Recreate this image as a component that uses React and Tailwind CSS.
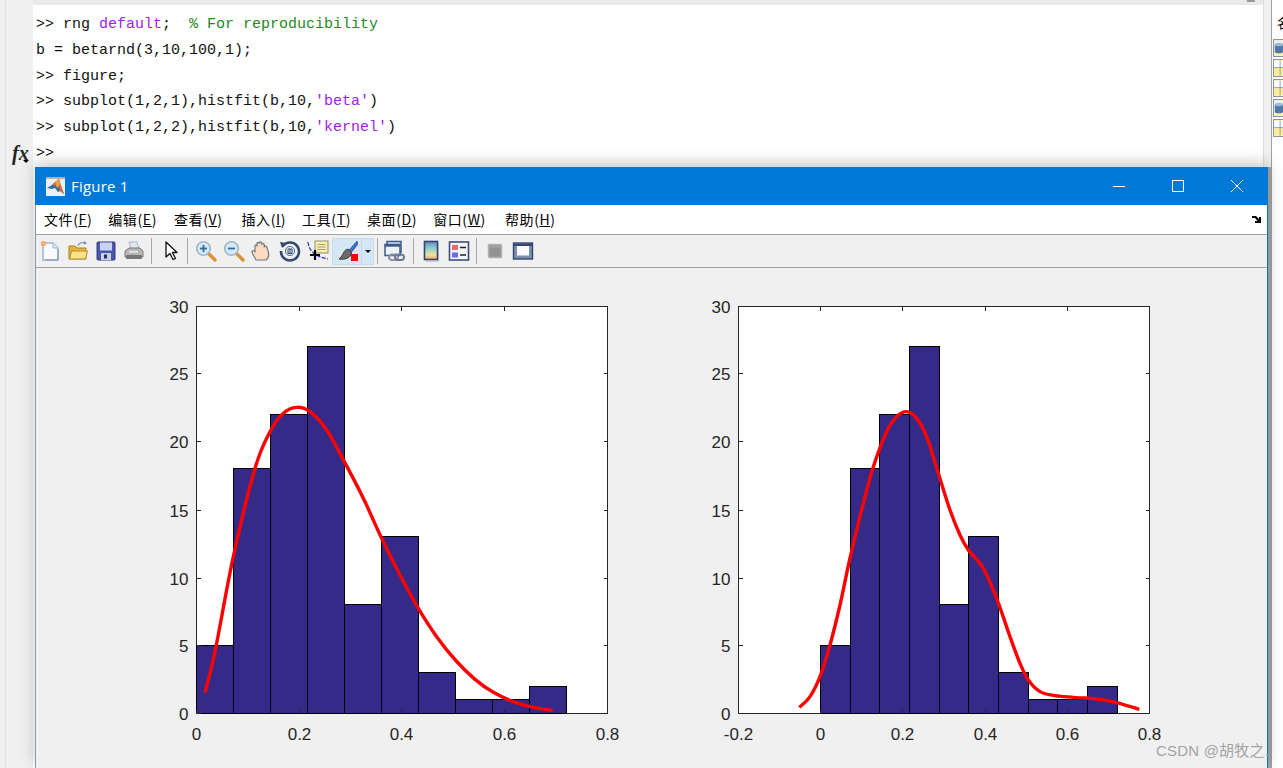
import React from "react";

const mono = "font-['Liberation_Mono',monospace]";

function smooth(zoomPts, ox) {
  const p = zoomPts.map(([x, y]) => [x / 3 + ox, y / 3 + 290]);
  let d = `M${p[0][0]} ${p[0][1]}`;
  for (let i = 0; i < p.length - 1; i++) {
    const a = p[Math.max(i - 1, 0)], b = p[i], c = p[i + 1], e = p[Math.min(i + 2, p.length - 1)];
    d += `C${b[0] + (c[0] - a[0]) / 6} ${b[1] + (c[1] - a[1]) / 6} ${c[0] - (e[0] - b[0]) / 6} ${c[1] - (e[1] - b[1]) / 6} ${c[0]} ${c[1]}`;
  }
  return d;
}

const counts = [5, 18, 22, 27, 8, 13, 3, 1, 1, 2];
const yTicks = [[30, 306.5], [25, 373.5], [20, 441.5], [15, 510.5], [10, 578.5], [5, 645.5], [0, 713.5]];

const leftCurve = [[165,1208],[195,1085],[250,800],[315,535],[360,425],[400,370],[440,352],[480,365],[530,420],[583,515],[640,625],[695,745],[750,855],[805,955],[860,1040],[916,1110],[975,1168],[1030,1207],[1090,1235],[1140,1250],[1208,1262]];
const rightCurve = [[298,1252],[330,1220],[360,1160],[390,1065],[420,945],[451,800],[490,640],[520,530],[560,425],[590,380],[620,365],[650,385],[680,440],[715,550],[750,660],[780,735],[805,780],[850,835],[890,925],[930,1040],[960,1120],[985,1170],[1020,1205],[1060,1216],[1120,1222],[1200,1228],[1250,1238],[1318,1258]];

function Plot({ ox, axL, axR, edges, xTicks, curve, className }) {
  const zero = 713.5, unit = 13.6;
  return (
    <svg width="480" height="478" viewBox={`${ox} 290 480 478`} className={className}>
      <rect x={axL} y="306.5" width={axR - axL} height="407" fill="#fff" stroke="#262626" shapeRendering="crispEdges" />
      <g fill="#352a87" stroke="#000" shapeRendering="crispEdges">
        {counts.map((c, i) => (
          <rect key={i} x={edges[i]} y={zero - c * unit} width={edges[i + 1] - edges[i]} height={c * unit} />
        ))}
      </g>
      <g stroke="#262626" shapeRendering="crispEdges">
        {yTicks.map(([, y]) => (
          <g key={y}>
            <line x1={axL} x2={axL + 4} y1={y} y2={y} />
            <line x1={axR - 4} x2={axR} y1={y} y2={y} />
          </g>
        ))}
        {xTicks.map(([, x]) => (
          <g key={x}>
            <line x1={x} x2={x} y1="306.5" y2="310.5" />
            <line x1={x} x2={x} y1="709.5" y2="713.5" />
          </g>
        ))}
      </g>
      <path d={smooth(curve, ox)} fill="none" stroke="#ff0000" strokeWidth="3.4" />
      <g fill="#262626" fontFamily="'Liberation Sans', Arial, sans-serif" fontSize="17">
        {yTicks.map(([t, y]) => (
          <text key={t} x={axL - 8} y={y + 6.5} textAnchor="end">{t}</text>
        ))}
        {xTicks.map(([t, x]) => (
          <text key={t} x={x} y="740" textAnchor="middle">{t}</text>
        ))}
      </g>
    </svg>
  );
}

const Ico = ({ children, w = 28 }) => (
  <div className="h-[24px] flex items-center justify-center shrink-0" style={{ width: w }}>
    <svg width="22" height="22" viewBox="0 0 22 22">{children}</svg>
  </div>
);
const Sep = ({ className }) => <div className={`w-[1px] h-[26px] bg-[#a8a8a8] shrink-0 ${className}`} />;

const NewDoc = () => (
  <Ico>
    <path d="M4 3h10l5 5v12H4z" fill="#f7fbff" stroke="#9db4d6" strokeWidth="1.5" />
    <path d="M14 3v5h5" fill="#dbe6f5" stroke="#9db4d6" />
    <path d="M19 9v11H6" fill="none" stroke="#7e97bd" strokeWidth="1" />
    <circle cx="4.5" cy="3.5" r="2.6" fill="#f6a05a" />
    <circle cx="4.5" cy="3.5" r="1.1" fill="#ffe0b8" />
  </Ico>
);
const OpenFolder = () => (
  <Ico>
    <path d="M11 6c1-3 4-4 7-3" fill="none" stroke="#8fa3bb" strokeWidth="1.6" />
    <path d="M17 1l3 2-3 2z" fill="#7e93ad" />
    <path d="M2 6h6l2 2h9v11H2z" fill="#e3b43f" stroke="#a98222" />
    <path d="M2.5 19l2-8h16l-2 8z" fill="#fbe28a" stroke="#b48c2c" />
  </Ico>
);
const Save = () => (
  <Ico>
    <rect x="2" y="2" width="18" height="18" rx="1" fill="#4a56ad" stroke="#2f3a80" />
    <rect x="5" y="2.5" width="12" height="8" fill="#c9d2f0" />
    <rect x="6" y="13" width="10" height="7" fill="#c9cfe6" />
    <rect x="9" y="14.5" width="3" height="4" fill="#26305f" />
  </Ico>
);
const Printer = () => (
  <Ico>
    <path d="M6 2h8l2 7H8z" fill="#dfe6f2" stroke="#a9b4c4" />
    <path d="M2 11l4-3h11l3 3v6H2z" fill="#b5b5b5" stroke="#7a7a7a" />
    <rect x="3" y="15" width="16" height="4" rx="1" fill="#777" />
    <rect x="6" y="11" width="9" height="1.6" fill="#e8e8e8" />
  </Ico>
);
const Cursor = () => (
  <Ico>
    <path d="M6 2v15l4-3.5 3 6 2.4-1.2-3-5.8H17z" fill="#fff" stroke="#111" strokeWidth="1.3" strokeLinejoin="round" />
  </Ico>
);
const Zoom = ({ plus }) => (
  <Ico>
    <path d="M13 13l7 7" stroke="#dd9233" strokeWidth="3.4" strokeLinecap="round" />
    <circle cx="8.5" cy="8.5" r="6.8" fill="#d6e8f6" stroke="#9cb6cd" strokeWidth="1.6" />
    <path d="M5 8.5h7" stroke="#2f6d9e" strokeWidth="1.8" />
    {plus && <path d="M8.5 5v7" stroke="#2f6d9e" strokeWidth="1.8" />}
  </Ico>
);
const Hand = () => (
  <Ico>
    <path d="M5 20c-1-3-4-6-4-8s2-1.5 3 0V6c0-1.5 2-1.5 2 0V3.5c0-1.5 2.4-1.5 2.4 0V3c0-1.5 2.4-1.5 2.4 0v1.5c0-1.5 2.4-1.5 2.4 0V7c.5-1.5 2.6-1.2 2.6.4C18 12 19 17 15 20z" fill="#fbdcc0" stroke="#737a86" strokeWidth="1.2" strokeLinejoin="round" />
  </Ico>
);
const Rotate = () => (
  <Ico>
    <path d="M3.5 6.5A9 9 0 1 1 2 11" fill="none" stroke="#2f4a72" strokeWidth="2.6" />
    <path d="M1 2l6 1-4 5z" fill="#2f4a72" />
    <circle cx="11" cy="11" r="4.6" fill="#dfe6ee" stroke="#5a6f8e" />
    <path d="M9 9h4v4.5H9zM11 9v4.5" fill="none" stroke="#2f4a72" strokeWidth="1" />
  </Ico>
);
const DataCursor = () => (
  <Ico>
    <path d="M1 2c1 8 5 14 20 17" fill="none" stroke="#2a2ad8" strokeWidth="1.2" strokeDasharray="4 1.5" />
    <rect x="8" y="1" width="13" height="12" fill="#f7eeb0" stroke="#8d8d6a" />
    <path d="M10.5 4.5h8M10.5 7h8M10.5 9.5h8" stroke="#a3a07c" />
    <path d="M8 10v10M3 15h10" stroke="#000" strokeWidth="2.2" />
  </Ico>
);
const Brush = () => (
  <Ico>
    <path d="M21 1l-8 9 2.4 2.4L22 4z" fill="#3b6fc6" stroke="#2a4a8a" strokeWidth="0.6" />
    <path d="M12 9c-5 1-4 6-9 10 6 1 12-1 12.5-6.5z" fill="#6b6b6b" stroke="#3a3a3a" />
    <rect x="15" y="14" width="7" height="7" fill="#ff0000" />
  </Ico>
);
const Link = () => (
  <Ico>
    <rect x="3" y="1.5" width="14" height="11" fill="#d9e3f2" stroke="#3c5a8a" strokeWidth="1.5" />
    <rect x="1" y="4.5" width="15" height="11" fill="#eef2f9" stroke="#3c5a8a" strokeWidth="1.5" />
    <path d="M1 4.5h15v2.2H1z" fill="#3c5a8a" />
    <rect x="5" y="14.5" width="9" height="5.5" rx="2.7" fill="none" stroke="#8a97ab" strokeWidth="2" />
    <rect x="11" y="14.5" width="9" height="5.5" rx="2.7" fill="none" stroke="#6b7a92" strokeWidth="2" />
  </Ico>
);
const Colorbar = () => (
  <Ico>
    <defs>
      <linearGradient id="cb" x1="0" y1="0" x2="0" y2="1">
        <stop offset="0" stopColor="#6d7fd8" />
        <stop offset="0.4" stopColor="#8fd3c8" />
        <stop offset="0.75" stopColor="#f3e39a" />
        <stop offset="1" stopColor="#eea06a" />
      </linearGradient>
    </defs>
    <rect x="4.5" y="1.5" width="13" height="18" fill="url(#cb)" stroke="#33466f" strokeWidth="1.6" />
    <path d="M18.5 3v18H6" fill="none" stroke="#a9a9b5" />
  </Ico>
);
const Legend = () => (
  <Ico>
    <rect x="1.5" y="2" width="19" height="18" fill="#f4f6fb" stroke="#3c4f7c" strokeWidth="1.6" />
    <rect x="4" y="5" width="6" height="5" fill="#ee6a6a" />
    <rect x="4" y="12.5" width="6" height="5" fill="#6a6ae6" />
    <path d="M12 7.5h6M12 15h6" stroke="#222" strokeWidth="1.4" />
  </Ico>
);
const GraySquare = () => (
  <Ico>
    <rect x="4.5" y="4.5" width="13" height="13" rx="1" fill="#929292" stroke="#b0b0b0" strokeWidth="1.5" />
    <rect x="5.5" y="5.5" width="11" height="2" fill="#a6a6a6" />
  </Ico>
);
const Frame = () => (
  <Ico>
    <rect x="1.5" y="3" width="19" height="16" fill="#7d8fb0" stroke="#33466f" strokeWidth="1.4" />
    <path d="M2 5h18" stroke="#33466f" strokeWidth="2" />
    <rect x="5" y="6" width="12" height="9.5" fill="#fbfbfb" />
  </Ico>
);

const menu = [
  ["文件", "F", "ml-[8px]"],
  ["编辑", "E", "ml-[16px]"],
  ["查看", "V", "ml-[17px]"],
  ["插入", "I", "ml-[19px]"],
  ["工具", "T", "ml-[16px]"],
  ["桌面", "D", "ml-[16px]"],
  ["窗口", "W", "ml-[16px]"],
  ["帮助", "H", "ml-[19px]"],
];

const Line = ({ children }) => <div className="h-[25.8px] leading-[25.8px] whitespace-pre">{children}</div>;
const Str = ({ children }) => <span className="text-[#a020f0]">{children}</span>;

const Tile = ({ cyl }) => (
  <div className="w-[11px] h-[18px] bg-[#fbeeb0] border border-[#8a94a6] flex items-center overflow-hidden shrink-0">
    <svg width="11" height="18" viewBox="0 0 11 18">
      {cyl ? (
        <g>
          <rect x="0" y="0" width="11" height="18" fill="#e9f0f8" />
          <rect x="0" y="11" width="11" height="7" fill="#fbeeb0" />
          <path d="M1 5c0-2 10-2 10 0v9c0 2-10 2-10 0z" fill="#4f78a8" />
          <ellipse cx="6" cy="5" rx="5" ry="1.8" fill="#9db9d6" />
        </g>
      ) : (
        <g>
          <rect x="0" y="0" width="11" height="9" fill="#fbfdff" />
          <rect x="0" y="9" width="11" height="9" fill="#fdeb9a" />
          <path d="M0 8.5h11M7.5 0v18" stroke="#6f93bd" />
        </g>
      )}
    </svg>
  </div>
);

export default function App() {
  return (
    <div className="relative w-[1283px] h-[768px] overflow-hidden flex bg-[#f0f0f0] font-['Liberation_Sans',sans-serif]">
      {/* left gutter */}
      <div className="w-[33px] shrink-0 relative pl-[5px]">
        <div className="h-full border-l border-[#e2e2e2]" />
        <div className="absolute left-[12px] top-[141px] font-['Liberation_Serif',serif] italic font-bold text-[20px] leading-[24px] text-[#222]">fx</div>
        <div className="absolute left-[23px] top-[160px] w-0 h-0 border-x-[3px] border-x-transparent border-t-[3px] border-t-black" />
      </div>

      {/* command window */}
      <div className="w-[1230px] shrink-0 flex flex-col">
        <div className="h-[5px] bg-[#e9e9e9] flex justify-end pr-[8px] shrink-0">
          <div className="w-[8px] h-[2px] bg-[#9a9a9a]" />
        </div>
        <div className={`flex-1 bg-white pl-[3px] pt-[7px] text-[15px] text-[#111] ${mono}`}>
          <Line>{">> rng "}<Str>default</Str>{";  "}<span className="text-[#228b22]">% For reproducibility</span></Line>
          <Line>b = betarnd(3,10,100,1);</Line>
          <Line>{">> figure;"}</Line>
          <Line>{">> subplot(1,2,1),histfit(b,10,"}<Str>'beta'</Str>{")"}</Line>
          <Line>{">> subplot(1,2,2),histfit(b,10,"}<Str>'kernel'</Str>{")"}</Line>
          <Line>{">>"}</Line>
        </div>
      </div>

      {/* strip */}
      <div className="w-[8px] shrink-0 bg-[#f0f0f0] border-l border-[#dcdcdc]" />

      {/* right panel */}
      <div className="flex-1 bg-white border-l border-[#a0a0a0] flex flex-col gap-[2px] pl-[1px] pt-[14px] overflow-hidden">
        <div className="h-[23px] pl-[4px] text-[13px] leading-[18px] font-['Noto_Sans_CJK_SC',sans-serif] text-black whitespace-nowrap">名</div>
        <Tile cyl />
        <Tile />
        <Tile />
        <Tile cyl />
        <Tile />
      </div>

      {/* figure window */}
      <div className="absolute left-[35px] top-[167px] w-[1233px] h-[601px] flex flex-col bg-[#f0f0f0] border-x border-l-[#8a9aa8] border-r-[#0078d7] shadow-[0_-4px_14px_rgba(0,0,0,0.22),3px_0_0_#a6a6a6]">
        <div className="h-[38px] bg-[#0078d7] flex items-center shrink-0 -mx-[1px]">
          <svg width="19" height="19" viewBox="0 0 19 19" className="ml-[11px] shrink-0">
            <rect x="0" y="0" width="19" height="19" fill="#eceff2" />
            <rect x="0" y="0" width="19" height="2" fill="#a9b4bf" />
            <path d="M1 11l5-3 3-3 4-3 2 7 3 8-4-3-2 1-3-4-3 1z" fill="#2f6da8" />
            <path d="M6 8l3-3 4-3 2 7 3 8-4-3-2-5z" fill="#e8642c" />
            <path d="M9 5l4-3 1 5-3 4z" fill="#f5a13a" />
          </svg>
          <span className="ml-[6px] text-[15px] tracking-[0.2px] text-white font-['Open_Sans',sans-serif]">Figure 1</span>
          <div className="ml-auto mr-[2px] flex shrink-0">
            <div className="w-[59px] h-[38px] flex items-center justify-center">
              <div className="w-[12px] h-[1px] bg-white" />
            </div>
            <div className="w-[59px] h-[38px] flex items-center justify-center">
              <div className="w-[12px] h-[12px] border border-white" />
            </div>
            <div className="w-[59px] h-[38px] flex items-center justify-center">
              <svg width="12" height="12" viewBox="0 0 12 12"><path d="M0 0l12 12M12 0L0 12" stroke="#fff" /></svg>
            </div>
          </div>
        </div>
        <div className="h-[29px] bg-white flex items-center shrink-0 border-b border-[#a3a3a3] text-[14px] text-black font-['Noto_Sans_CJK_SC',sans-serif] box-content -mb-[1px]">
          {menu.map(([t, k, m]) => (
            <span key={t} className={`${m} tracking-[0.6px] whitespace-nowrap`}>
              {t}(<span className="underline">{k}</span>)
            </span>
          ))}
          <svg width="10" height="9" viewBox="0 0 10 9" className="ml-auto mr-[5px] shrink-0">
            <path d="M0 1h4l3 3V2l2 0v6H3V6h2.5L3 3H0z" fill="#000" />
          </svg>
        </div>
        <div className="h-[33px] flex items-center shrink-0 border-b border-[#a3a3a3] mt-[1px]">
          <NewDoc /><OpenFolder /><Save /><Printer />
          <Sep className="ml-[3px]" />
          <div className="ml-[5px]"><Cursor /></div>
          <Sep className="ml-[2px]" />
          <div className="ml-[4px]"><Zoom plus /></div>
          <Zoom /><Hand /><Rotate /><DataCursor />
          <div className="flex h-[27px] bg-[#d5e6f5] border border-[#c4dcf0] items-center">
            <Brush />
            <div className="w-[12px] h-full border-l border-[#c4dcf0] flex items-center justify-center">
              <div className="w-0 h-0 border-x-[3px] border-x-transparent border-t-[3px] border-t-black" />
            </div>
          </div>
          <Sep className="ml-[3px]" />
          <div className="ml-[3px]"><Link /></div>
          <Sep className="ml-[4px]" />
          <div className="ml-[3px]"><Colorbar /></div>
          <Legend />
          <Sep className="ml-[3px]" />
          <div className="ml-[4px]"><GraySquare /></div>
          <Frame />
        </div>
        <div className="flex-1 flex pl-[114px] pt-[22px] overflow-hidden">
          <Plot
            ox={150}
            axL={196.5}
            axR={607.5}
            edges={[196.5, 233.5, 270.5, 307.5, 344.5, 381.5, 418.5, 455.5, 492.5, 529.5, 566.5]}
            xTicks={[["0", 196.5], ["0.2", 299.5], ["0.4", 401.5], ["0.6", 504.5], ["0.8", 607.5]]}
            curve={leftCurve}
            className="shrink-0"
          />
          <Plot
            ox={700}
            axL={738.5}
            axR={1149.5}
            edges={[820.5, 850.5, 879.5, 909.5, 939.5, 968.5, 998.5, 1028.5, 1057.5, 1087.5, 1117.5]}
            xTicks={[["-0.2", 738.5], ["0", 820.5], ["0.2", 902.5], ["0.4", 985.5], ["0.6", 1067.5], ["0.8", 1149.5]]}
            curve={rightCurve}
            className="shrink-0 ml-[70px]"
          />
        </div>
      </div>

      {/* watermark */}
      <div className="absolute left-[1156px] top-[741px] text-[15px] leading-[20px] tracking-[0.2px] text-[#a3a3a3] whitespace-nowrap font-['Liberation_Sans','Noto_Sans_CJK_SC',sans-serif]">CSDN @胡牧之.</div>
    </div>
  );
}
